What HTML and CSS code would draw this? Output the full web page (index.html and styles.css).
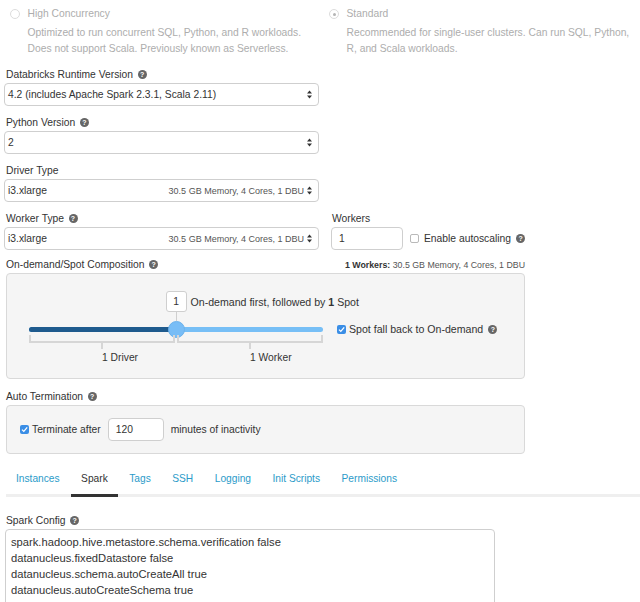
FILE: index.html
```html
<!DOCTYPE html>
<html lang="en">
<head>
<meta charset="utf-8">
<title>Cluster configuration</title>
<link rel="stylesheet" href="styles.css">
</head>
<body>
<div class="page">
  <div class="modes">
    <div class="mode">
      <div class="mode-head"><span class="radio"></span><span>High Concurrency</span></div>
      <p class="mode-desc">Optimized to run concurrent SQL, Python, and R workloads.<br>Does not support Scala. Previously known as Serverless.</p>
    </div>
    <div class="mode">
      <div class="mode-head"><span class="radio on"></span><span>Standard</span></div>
      <p class="mode-desc">Recommended for single-user clusters. Can run SQL, Python,<br>R, and Scala workloads.</p>
    </div>
  </div>

  <div class="field">
    <div class="field-label">Databricks Runtime Version <span class="help">?</span></div>
    <div class="select"><span>4.2 (includes Apache Spark 2.3.1, Scala 2.11)</span><svg class="arrows" viewBox="0 0 5 9" width="5" height="9"><polygon points="0,3.6 2.5,0.4 5,3.6"/><polygon points="0,5.4 5,5.4 2.5,8.6"/></svg></div>
  </div>

  <div class="field">
    <div class="field-label">Python Version <span class="help">?</span></div>
    <div class="select"><span>2</span><svg class="arrows" viewBox="0 0 5 9" width="5" height="9"><polygon points="0,3.6 2.5,0.4 5,3.6"/><polygon points="0,5.4 5,5.4 2.5,8.6"/></svg></div>
  </div>

  <div class="field">
    <div class="field-label">Driver Type</div>
    <div class="select"><span>i3.xlarge</span><span class="select-meta">30.5 GB Memory, 4 Cores, 1 DBU</span><svg class="arrows meta" viewBox="0 0 5 9" width="5" height="9"><polygon points="0,3.6 2.5,0.4 5,3.6"/><polygon points="0,5.4 5,5.4 2.5,8.6"/></svg></div>
  </div>

  <div class="worker-row">
    <div class="field worker-type">
      <div class="field-label">Worker Type <span class="help">?</span></div>
      <div class="select"><span>i3.xlarge</span><span class="select-meta">30.5 GB Memory, 4 Cores, 1 DBU</span><svg class="arrows meta" viewBox="0 0 5 9" width="5" height="9"><polygon points="0,3.6 2.5,0.4 5,3.6"/><polygon points="0,5.4 5,5.4 2.5,8.6"/></svg></div>
    </div>
    <div class="field workers">
      <div class="field-label">Workers</div>
      <div class="workers-line">
        <div class="text-input workers-input">1</div>
        <div class="check-label autoscale"><span class="check"></span><span>Enable autoscaling</span><span class="help">?</span></div>
      </div>
    </div>
  </div>

  <div class="comp-head">
    <div class="field-label">On-demand/Spot Composition <span class="help">?</span></div>
    <div class="comp-info"><b>1 Workers:</b> 30.5 GB Memory, 4 Cores, 1 DBU</div>
  </div>

  <div class="panel spot-panel">
    <div class="slider-col" style="--pos: 50%">
      <div class="spot-top"><div class="count-box">1</div><span class="spot-text">On-demand first, followed by <b>1</b> Spot</span></div>
      <div class="connector"></div>
      <div class="track">
        <div class="bar"><div class="bar-fill"></div></div>
        <div class="thumb"></div>
      </div>
      <div class="brackets"><div class="bracket"></div><div class="bracket"></div></div>
      <div class="tick-labels"><div class="tick-label">1 Driver</div><div class="tick-label">1 Worker</div></div>
    </div>
    <div class="check-label spot-fallback"><span class="check on"><svg viewBox="0 0 9 9" width="9" height="9"><polyline points="2,4.6 3.8,6.4 7.2,2.4"/></svg></span><span>Spot fall back to On-demand</span><span class="help">?</span></div>
  </div>

  <div class="field">
    <div class="field-label">Auto Termination <span class="help">?</span></div>
    <div class="panel term-panel">
      <span class="check on"><svg viewBox="0 0 9 9" width="9" height="9"><polyline points="2,4.6 3.8,6.4 7.2,2.4"/></svg></span>
      <span class="term-text">Terminate after</span>
      <div class="text-input term-input">120</div>
      <span class="term-after">minutes of inactivity</span>
    </div>
  </div>

  <div class="tabs">
    <span class="tab">Instances</span>
    <span class="tab active">Spark</span>
    <span class="tab">Tags</span>
    <span class="tab">SSH</span>
    <span class="tab">Logging</span>
    <span class="tab">Init Scripts</span>
    <span class="tab">Permissions</span>
  </div>

  <div class="field config">
    <div class="field-label">Spark Config <span class="help">?</span></div>
    <div class="config-box">
      <div>spark.hadoop.hive.metastore.schema.verification false</div>
      <div>datanucleus.fixedDatastore false</div>
      <div>datanucleus.schema.autoCreateAll true</div>
      <div>datanucleus.autoCreateSchema true</div>
    </div>
  </div>
</div>
</body>
</html>
```

FILE: styles.css
```css
* { box-sizing: border-box; }

body {
  margin: 0;
  background: #fff;
  color: #333;
  font-family: "Liberation Sans", Arial, sans-serif;
  font-size: 10.3px;
}

.page {
  padding: 6px 0 0 6px;
  overflow: hidden;
  height: 602px;
}

/* cluster mode */
.modes {
  display: flex;
  padding-left: 4px;
  margin-bottom: 9px;
  color: #adadad;
}
.mode { width: 319px; flex: none; }
.mode-head {
  display: flex;
  align-items: center;
  gap: 7.5px;
  height: 16px;
  line-height: 16px;
}
.radio {
  width: 10px;
  height: 10px;
  border: 1px solid #dcdcdc;
  border-radius: 50%;
  display: flex;
  align-items: center;
  justify-content: center;
  flex: none;
}
.radio.on::after {
  content: "";
  width: 3px;
  height: 3px;
  border-radius: 50%;
  background: #b5b5b5;
}
.mode-desc {
  margin: 3px 0 0 17.5px;
  line-height: 16px;
  white-space: nowrap;
}

/* fields */
.field { margin-bottom: 8px; }
.field-label {
  display: flex;
  align-items: center;
  gap: 4.5px;
  height: 17px;
  line-height: 17px;
  white-space: nowrap;
}
.help {
  width: 9px;
  height: 9px;
  border-radius: 50%;
  background: #666;
  color: #fff;
  font-size: 7px;
  font-weight: bold;
  line-height: 9px;
  text-align: center;
  flex: none;
  display: inline-block;
}

.select {
  margin-left: -2px;
  width: 315px;
  height: 23px;
  border: 1px solid #cfcfcf;
  border-radius: 4px;
  background: #fff;
  display: flex;
  align-items: center;
  padding: 0 6px 0 3px;
  white-space: nowrap;
}
.select-meta {
  margin-left: auto;
  font-size: 9px;
  color: #555;
}
.arrows { margin-left: auto; flex: none; fill: #333; }
.arrows.meta { margin-left: 3px; }

/* worker row */
.worker-row {
  display: flex;
  margin-bottom: 6px;
}
.worker-row .field { margin-bottom: 0; }
.worker-type { width: 325px; flex: none; }
.workers .field-label { padding-left: 1px; }
.workers-line {
  display: flex;
  align-items: center;
}
.text-input {
  height: 23px;
  border: 1px solid #cfcfcf;
  border-radius: 4px;
  background: #fff;
  display: flex;
  align-items: center;
}
.workers-input {
  width: 72px;
  padding-left: 7px;
}
.check-label {
  display: flex;
  align-items: center;
  gap: 4px;
  line-height: 16px;
  white-space: nowrap;
}
.autoscale { margin-left: 7px; gap: 5px; }
.check {
  width: 9px;
  height: 9px;
  border: 1px solid #b9b9b9;
  border-radius: 2px;
  background: #fff;
  flex: none;
  display: flex;
}
.check.on {
  border: none;
  background: #3a8ee6;
}
.check svg {
  fill: none;
  stroke: #fff;
  stroke-width: 1.3;
}

/* composition */
.comp-head {
  width: 519px;
  display: flex;
  justify-content: space-between;
  align-items: center;
}
.comp-info {
  font-size: 8.8px;
  color: #555;
  white-space: nowrap;
}
.comp-info b { color: #333; }

.panel {
  width: 519px;
  border: 1px solid #d9d9d9;
  border-radius: 4px;
  background: #f5f5f5;
}
.spot-panel {
  display: flex;
  padding: 17px 0 13px 22px;
  margin-bottom: 9px;
}
.slider-col { width: 294px; flex: none; }
.spot-top {
  display: flex;
  align-items: center;
  height: 21px;
  white-space: nowrap;
}
.count-box {
  margin-left: calc(var(--pos) - 10.5px);
  width: 21px;
  height: 21px;
  border: 1px solid #cfcfcf;
  border-radius: 3px;
  background: #fff;
  display: flex;
  align-items: center;
  justify-content: center;
  flex: none;
}
.spot-text { margin-left: 4px; font-size: 10.6px; }
.connector {
  margin-left: calc(var(--pos) - 0.5px);
  width: 1px;
  height: 9px;
  background: #cfcfcf;
}
.track {
  position: relative;
  height: 17px;
  padding-top: 6px;
}
.bar {
  height: 5px;
  border-radius: 3px;
  background: #77bff6;
  overflow: hidden;
}
.bar-fill {
  width: var(--pos);
  height: 100%;
  background: #1f5b8e;
}
.thumb {
  position: absolute;
  top: 0;
  left: calc(var(--pos) - 8.5px);
  width: 17px;
  height: 17px;
  border-radius: 50%;
  background: #78bdf6;
  border: 1px solid #6cb2ec;
}
.brackets {
  display: flex;
  gap: 2px;
  margin-top: -3px;
}
.bracket {
  position: relative;
  flex: 1;
  height: 8px;
  border: 2px solid #d6d6d6;
  border-top: none;
}
.bracket::after {
  content: "";
  position: absolute;
  left: calc(50% - 1px);
  top: 100%;
  width: 2px;
  height: 8px;
  background: #d6d6d6;
}
.tick-labels {
  display: flex;
  gap: 2px;
  margin-top: 8px;
  line-height: 14px;
}
.tick-label {
  flex: 1;
  text-indent: 50%;
  white-space: nowrap;
}
.spot-fallback {
  margin-left: 14px;
  padding-top: 30px;
  align-self: flex-start;
  gap: 3px;
  font-size: 10.6px;
}
.spot-fallback .help { margin-left: 2px; }

/* auto termination */
.term-panel {
  display: flex;
  align-items: center;
  padding: 12px 13px;
}
.term-text { margin-left: 3px; white-space: nowrap; }
.term-input {
  margin-left: 7px;
  width: 56px;
  padding-left: 7px;
}
.term-after { margin-left: 7px; white-space: nowrap; }

/* tabs */
.tabs {
  display: flex;
  margin-top: 14px;
  border-bottom: 3px solid #efefef;
}
.tab {
  padding: 0 10px 4px;
  line-height: 22px;
  font-size: 10.2px;
  color: #2b9bc9;
  border-bottom: 3px solid transparent;
  margin-bottom: -3px;
  margin-right: 1.5px;
  white-space: nowrap;
}
.tab.active {
  color: #333;
  border-bottom-color: #333;
}

/* spark config */
.config { margin-top: 15px; }
.config-box {
  margin-left: -1px;
  width: 490px;
  height: 90px;
  border: 1px solid #cfcfcf;
  border-radius: 4px;
  padding: 4px 5px;
  font-size: 11.2px;
  line-height: 16px;
  white-space: nowrap;
  background: #fff;
}
```
